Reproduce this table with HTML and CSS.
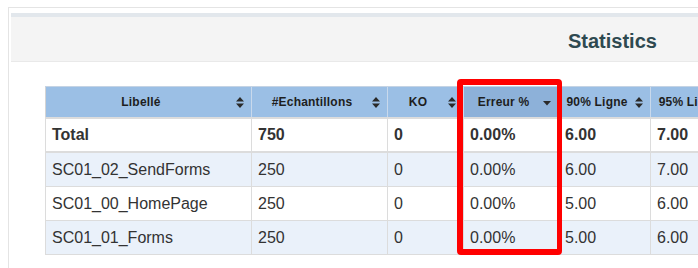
FILE: index.html
```html
<!DOCTYPE html>
<html>
<head>
<meta charset="utf-8">
<link rel="stylesheet" href="styles.css">
</head>
<body>
<div class="page">
  <div class="panel">
    <div class="panel-head"><h2 class="title">Statistics</h2></div>
    <div class="table-wrap">
      <table class="stats">
        <colgroup>
          <col class="c1"><col class="c2"><col class="c3"><col class="c4"><col class="c5"><col class="c6">
        </colgroup>
        <thead>
          <tr>
            <th><div class="th-in"><span class="lbl">Libellé</span><svg class="sort" viewBox="0 0 8 11"><path d="M4 0L8 4.5H0Z M4 11L8 6.5H0Z"/></svg></div></th>
            <th><div class="th-in"><span class="lbl">#Echantillons</span><svg class="sort" viewBox="0 0 8 11"><path d="M4 0L8 4.5H0Z M4 11L8 6.5H0Z"/></svg></div></th>
            <th><div class="th-in"><span class="lbl">KO</span><svg class="sort" viewBox="0 0 8 11"><path d="M4 0L8 4.5H0Z M4 11L8 6.5H0Z"/></svg></div></th>
            <th class="sorted"><div class="th-in"><span class="lbl">Erreur %</span><svg class="sort" viewBox="0 0 8 11"><path d="M4 8.5L8 4H0Z"/></svg></div></th>
            <th><div class="th-in"><span class="lbl">90% Ligne</span><svg class="sort" viewBox="0 0 8 11"><path d="M4 0L8 4.5H0Z M4 11L8 6.5H0Z"/></svg></div></th>
            <th><div class="th-in"><span class="lbl">95% Ligne</span><svg class="sort" viewBox="0 0 8 11"><path d="M4 0L8 4.5H0Z M4 11L8 6.5H0Z"/></svg></div></th>
          </tr>
        </thead>
        <tbody>
          <tr class="total"><td>Total</td><td>750</td><td>0</td><td>0.00%</td><td>6.00</td><td>7.00</td></tr>
          <tr class="alt"><td>SC01_02_SendForms</td><td>250</td><td>0</td><td>0.00%</td><td>6.00</td><td>7.00</td></tr>
          <tr><td>SC01_00_HomePage</td><td>250</td><td>0</td><td>0.00%</td><td>5.00</td><td>6.00</td></tr>
          <tr class="alt"><td>SC01_01_Forms</td><td>250</td><td>0</td><td>0.00%</td><td>5.00</td><td>6.00</td></tr>
        </tbody>
      </table>
      <div class="highlight"></div>
    </div>
  </div>
</div>
</body>
</html>
```
FILE: styles.css
```css
html, body {
  margin: 0;
  padding: 0;
  background: #fff;
  overflow: hidden;
  width: 698px;
  height: 268px;
}
.page {
  padding: 7px 0 0 8px;
  font-family: "Liberation Sans", Arial, sans-serif;
}
.panel {
  box-sizing: border-box;
  width: 690px;
  height: 261px;
  overflow: hidden;
  border-left: 1px solid #e4e4e4;
  border-top: 1px solid #e4e4e4;
  padding: 5px 0 0 2px;
}
.panel-head {
  border-top: 4px solid #e2e7ec;
  background: #f4f4f4;
  height: 44px;
  border-bottom: 1px solid #e9e9e9;
}
.title {
  margin: 0;
  padding: 12px 0 0 557px;
  font-size: 20px;
  font-weight: bold;
  color: #2e4950;
  line-height: 24px;
}
.table-wrap {
  position: relative;
  margin: 24px 0 0 34px;
  width: 700px;
}
.stats {
  border-collapse: collapse;
  table-layout: fixed;
  width: 697px;
  color: #333;
}
.c1 { width: 206px; }
.c2 { width: 136px; }
.c3 { width: 76px; }
.c4 { width: 95px; }
.c5 { width: 92px; }
.c6 { width: 92px; }
.stats th {
  background: #9bbfe5;
  height: 30px;
  padding: 0;
  border-left: 1px solid #c9d9ec;
  border-top: 1px solid #c4d3e4;
  border-bottom: 2px solid #dcdcdc;
  font-size: 12px;
  font-weight: bold;
  color: #1e1e1e;
  letter-spacing: 0.2px;
  white-space: nowrap;
}
.stats th:first-child { border-left: 1px solid #d4d4d4; }
.stats th.sorted { background: #8db1d9; }
.th-in {
  display: flex;
  align-items: center;
  padding: 0 7px 0 0;
}
.lbl {
  flex: 1;
  text-align: center;
}
.sort {
  flex: none;
  width: 8px;
  height: 11px;
  fill: #2a2a2a;
}
.stats td {
  height: 33px;
  padding: 0 6px;
  border: 1px solid #dcdcdc;
  font-size: 16px;
  white-space: nowrap;
}
.stats tr.total td {
  font-weight: bold;
  height: 32px;
  border-bottom: 2px solid #dcdcdc;
}
.stats tr.alt td { background: #eaf1fa; }
.highlight {
  position: absolute;
  left: 412px;
  top: -7px;
  width: 94px;
  height: 164px;
  border: 6px solid #ff0000;
  border-right-width: 5px;
  border-radius: 4px;
}
```
